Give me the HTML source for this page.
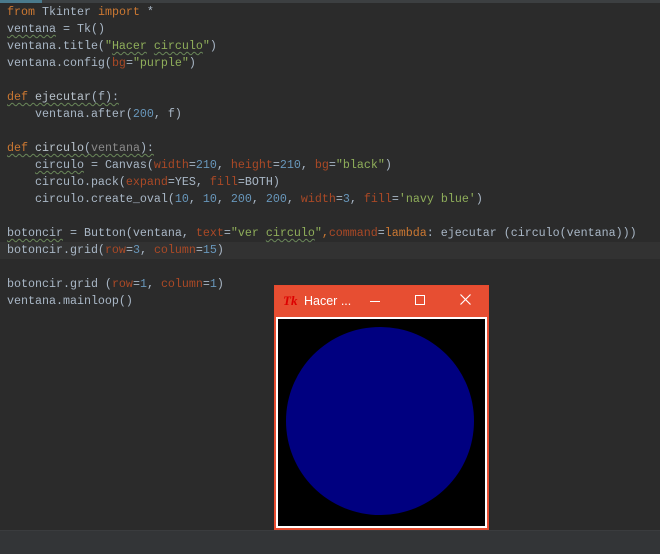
<!DOCTYPE html>
<html><head><meta charset="utf-8"><style>
html,body{margin:0;padding:0;}
body{width:660px;height:553px;background:#2b2b2b;position:relative;overflow:hidden;font-family:"Liberation Mono",monospace;}
.top{position:absolute;left:0;top:0;width:660px;height:3px;background:#3c3f41;}
.top i{position:absolute;left:0;top:0;width:42px;height:3px;background:#4a7a8c;}
.cur{position:absolute;left:0;top:242px;width:660px;height:17px;background:#323232;}
.code{position:absolute;left:7px;top:4px;font-size:11.67px;line-height:17px;color:#a9b7c6;white-space:pre;}
.k{color:#cc7832}.s{color:#8fae5a}.n{color:#6897bb}.a{color:#aa4926}.f{color:#b9c3cc}.g{color:#8a8a8a}
.w{text-decoration:underline wavy #6a8759;text-decoration-thickness:1px;text-underline-offset:2px}
.bottom{position:absolute;left:0;top:530px;width:660px;height:23px;background:#333537;border-top:1px solid #3a3c3e;}
.win{position:absolute;left:274px;top:285px;width:213px;height:243px;background:#e74e32;border:1px solid #e84a2e;}
.tb{position:absolute;left:0;top:0;width:213px;height:31px;color:#fff;font-family:"Liberation Sans",sans-serif;font-size:12.5px;}
.cv{position:absolute;left:1px;top:31px;width:207px;height:207px;background:#000;border:2px solid #fff;}
.circ{position:absolute;left:8px;top:8px;width:188px;height:188px;border-radius:50%;background:#000080;}
</style></head><body>
<div class="top"><i></i></div>
<div class="cur"></div>
<div class="code"><span class="k">from</span> Tkinter <span class="k">import</span> *
<span class="w">ventana</span> = Tk()
ventana.title(<span class="s">"<span class="w">Hacer</span> <span class="w">circulo</span>"</span>)
ventana.config(<span class="a">bg</span>=<span class="s">"purple"</span>)

<span class="w"><span class="k">def</span> <span class="f">ejecutar</span>(f):</span>
    ventana.after(<span class="n">200</span>, f)

<span class="w"><span class="k">def</span> <span class="f">circulo</span>(<span class="g">ventana</span>):</span>
    <span class="w">circulo</span> = Canvas(<span class="a">width</span>=<span class="n">210</span>, <span class="a">height</span>=<span class="n">210</span>, <span class="a">bg</span>=<span class="s">"black"</span>)
    circulo.pack(<span class="a">expand</span>=YES, <span class="a">fill</span>=BOTH)
    circulo.create_oval(<span class="n">10</span>, <span class="n">10</span>, <span class="n">200</span>, <span class="n">200</span>, <span class="a">width</span>=<span class="n">3</span>, <span class="a">fill</span>=<span class="s">'navy blue'</span>)

<span class="w">botoncir</span> = Button(ventana, <span class="a">text</span>=<span class="s">"ver <span class="w">circulo</span>"</span><span class="k">,</span><span class="a">command</span>=<span class="k">lambda</span>: ejecutar (circulo(ventana)))
botoncir.grid(<span class="a">row</span>=<span class="n">3</span>, <span class="a">column</span>=<span class="n">15</span>)

botoncir.grid (<span class="a">row</span>=<span class="n">1</span>, <span class="a">column</span>=<span class="n">1</span>)
ventana.mainloop()</div>
<div class="bottom"></div>
<div class="win">
 <div class="tb">
  <span style="position:absolute;left:8px;top:7px;color:#d00;font-style:italic;font-weight:bold;font-family:'Liberation Serif',serif;font-size:13px;">Tk</span>
  <span style="position:absolute;left:29px;top:8px;">Hacer ...</span>
  <div style="position:absolute;left:95px;top:15px;width:10px;height:1px;background:#fff;"></div>
  <div style="position:absolute;left:140px;top:9px;width:8px;height:8px;border:1px solid #fff;"></div>
  <svg style="position:absolute;left:185px;top:8px" width="11" height="11"><path d="M0.5 0.5L10.5 10.5M10.5 0.5L0.5 10.5" stroke="#fff" stroke-width="1.2"/></svg>
 </div>
 <div class="cv"><div class="circ"></div></div>
</div>
</body></html>
